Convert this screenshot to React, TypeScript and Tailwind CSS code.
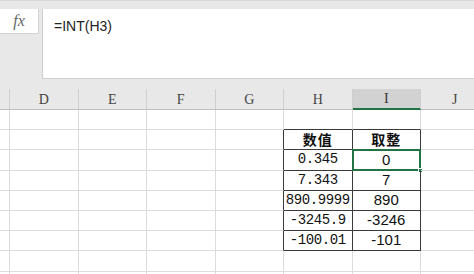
import React from "react";

const cols = ["D", "E", "F", "G", "H", "I", "J"];

const data: [string, string][] = [
  ["数值", "取整"],
  ["0.345", "0"],
  ["7.343", "7"],
  ["890.9999", "890"],
  ["-3245.9", "-3246"],
  ["-100.01", "-101"],
];

function cellBorder(row: number, col: number) {
  // table sits in rows 1..6 (body index), columns H (4) and I (5)
  const inTable = row >= 1 && row <= 6 && (col === 4 || col === 5);
  const leftOfTable = row >= 1 && row <= 6 && col === 3;
  const aboveTable = row === 0 && (col === 4 || col === 5);
  const right = inTable || leftOfTable ? "border-r-[#3a3a3a]" : "border-r-[#dcdcdc]";
  const bottom = inTable || aboveTable ? "border-b-[#3a3a3a]" : "border-b-[#dcdcdc]";
  return `${right} ${bottom}`;
}

export default function App() {
  const rows = Array.from({ length: 9 }, (_, i) => i);

  return (
    <div className="w-[474px] h-[274px] overflow-hidden bg-white select-none">
      {/* formula bar */}
      <div className="bg-[#e8e8e8] pt-[8px] pb-[10px] border-t border-t-[#d9d9d9]">
        <div className="flex h-[70px]">
          <div className="w-[39px] h-[25px] bg-white border-r border-b border-[#d4d4d4] flex items-center justify-center">
            <span className="text-[16px] italic text-[#666] font-['Liberation_Serif',serif] leading-none">
              fx
            </span>
          </div>
          <div className="ml-[3px] flex-1 bg-white border-l border-b border-[#d0d0d0] pl-[11px] pt-[4px]">
            <span className="text-[14px] leading-[20px] text-[#222] font-['Liberation_Sans','Noto_Sans',sans-serif]">
              =INT(H3)
            </span>
          </div>
        </div>
      </div>

      {/* column header */}
      <div className="flex h-[21px] bg-[#e8e8e8] border-b border-b-[#bfbfbf] font-['Liberation_Serif',serif] text-[14px] text-[#444]">
        <div className="w-[10px] shrink-0 border-r border-r-[#cfcfcf]" />
        {cols.map((c) =>
          c === "I" ? (
            <div
              key={c}
              className="w-[68.5px] shrink-0 bg-[#d2d2d2] border-r border-r-[#cfcfcf] border-b-2 border-b-[#217346] -mb-[1px] flex items-center justify-center text-[#333]"
            >
              {c}
            </div>
          ) : (
            <div
              key={c}
              className="w-[68.5px] shrink-0 border-r border-r-[#cfcfcf] flex items-center justify-center"
            >
              {c}
            </div>
          )
        )}
      </div>

      {/* grid body */}
      <div className="bg-white">
        {rows.map((r) => (
          <div key={r} className="flex h-[20.2px]">
            <div className="w-[10px] shrink-0 border-r border-b border-r-[#dcdcdc] border-b-[#dcdcdc]" />
            {cols.map((c, ci) => {
              const val =
                r >= 1 && r <= 6 && (c === "H" || c === "I")
                  ? data[r - 1][c === "H" ? 0 : 1]
                  : null;
              const header = r === 1;
              const selected = r === 2 && c === "I";
              return (
                <div
                  key={c}
                  className={`relative w-[68.5px] shrink-0 border-r border-b ${cellBorder(r, ci)} flex items-center justify-center whitespace-nowrap text-[#111] ${
                    header
                      ? "font-['Noto_Sans_CJK_SC',sans-serif] font-bold text-[14px] tracking-[1px]"
                      : c === "H"
                        ? "font-['Liberation_Mono','Noto_Sans_CJK_SC',monospace] text-[14px] tracking-[-0.4px]"
                        : "font-['Liberation_Sans',sans-serif] text-[15px]"
                  }`}
                >
                  {val}
                  {selected && (
                    <div className="absolute -left-[1px] -top-[1px] -right-[1px] -bottom-[1px] border-2 border-[#217346]">
                      <div className="absolute -right-[4px] -bottom-[4px] w-[5px] h-[5px] bg-[#217346] border border-white" />
                    </div>
                  )}
                </div>
              );
            })}
          </div>
        ))}
      </div>
    </div>
  );
}
